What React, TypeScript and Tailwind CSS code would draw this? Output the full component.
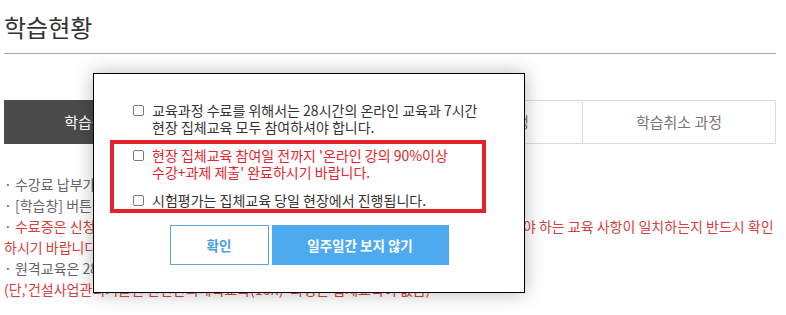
// 학습현황 페이지 + 공지 팝업

const FONT = "font-['Noto_Sans_CJK_KR','Noto_Sans',sans-serif]";

const tabs = ['학습중 과정', '수료 과정', '학습종료 과정', '학습취소 과정'];

function CheckBox() {
  return (
    <input
      type="checkbox"
      className="appearance-none shrink-0 w-[11px] h-[11px] mt-[3px] border border-[#7a7a7a] rounded-[2px] bg-white"
    />
  );
}

function NoticeItem({ children, red = false }: { children: React.ReactNode; red?: boolean }) {
  return (
    <label className="flex items-start gap-[8px]">
      <CheckBox />
      <span className={red ? 'break-keep text-[#e3262c]' : 'break-keep text-[#333]'}>{children}</span>
    </label>
  );
}

export default function App() {
  return (
    <div className={`relative w-[786px] h-[315px] overflow-hidden bg-white ${FONT}`}>
      <div className="pl-[4px] w-[776px]">
        <h1 className="pt-[11px] text-[24px] leading-[32px] text-[#333] font-normal">학습현황</h1>
        <div className="mt-[10px] h-px bg-[#a9a9a9]" />

        {/* 탭 */}
        <div className="mt-[46px] grid grid-cols-4 h-[44px] text-[15px]">
          {tabs.map((t, i) => (
            <div
              key={t}
              className={
                i === 0
                  ? 'flex items-center justify-center bg-[#4b4b4b] text-white'
                  : 'flex items-center justify-center border border-[#dcdcdc] text-[#777] -ml-px'
              }
            >
              {t}
            </div>
          ))}
        </div>

        {/* 안내 문구 */}
        <div className="mt-[30px] text-[14px] leading-[21px] whitespace-nowrap">
          <p className="text-[#666]">· 수강료 납부가 완료되어야 학습을 진행할 수 있습니다.</p>
          <p className="text-[#666]">· [학습창] 버튼을 클릭하시면 학습을 시작할 수 있습니다.</p>
          <p className="text-[#d5403f]">
            · 수료증은 신청자 본인의 정보로 발급되므로 수강신청 시 입력한 개인정보와 실제로 수료해야 하는 교육 사항이 일치하는지 반드시 확인
            <br />
            하시기 바랍니다.
          </p>
          <p className="text-[#666]">· 원격교육은 28시간, 집체교육은 7시간으로 구성되어 있습니다.</p>
          <p className="text-[#d5403f]">(단,'건설사업관리기술인 안전관리계획교육(16h)' 과정은 집체교육이 없음)</p>
        </div>
      </div>

      {/* 팝업 */}
      <div className="absolute left-[93px] top-[73px] w-[432px] h-[220px] border border-black bg-white shadow-[0_0_18px_rgba(0,0,0,0.28)] text-[14px] leading-[17px]">
        <div className="pt-[28px] px-[39px]">
          <NoticeItem>교육과정 수료를 위해서는 28시간의 온라인 교육과 7시간 현장 집체교육 모두 참여하셔야 합니다.</NoticeItem>
        </div>

        <div className="mt-[4px] ml-[16px] w-[376px] border-[4px] border-[#e3232a] pt-[3px] pl-[19px] pr-[6px] flex flex-col gap-[11px]">
          <NoticeItem red>현장 집체교육 참여일 전까지 '온라인 강의 90%이상 수강+과제 제출' 완료하시기 바랍니다.</NoticeItem>
          <NoticeItem>시험평가는 집체교육 당일 현장에서 진행됩니다.</NoticeItem>
        </div>

        <div className="mt-[12px] flex justify-center gap-[3px] text-[13.5px]">
          <button className="w-[99px] h-[40px] border border-[#5fa8d3] bg-white text-[#4a9fdc] font-bold">확인</button>
          <button className="w-[177px] h-[40px] bg-[#4eaaee] text-white font-bold">일주일간 보지 않기</button>
        </div>
      </div>
    </div>
  );
}
